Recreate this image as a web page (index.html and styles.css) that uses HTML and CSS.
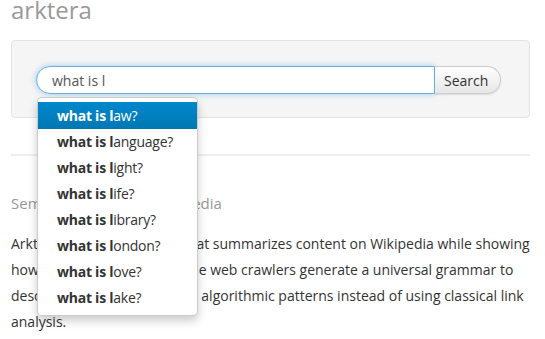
FILE: index.html
```html
<!DOCTYPE html>
<html lang="en">
<head>
    <meta charset="UTF-8">
    <meta name="viewport" content="width=device-width, initial-scale=1.0">
    <title>arktera</title>
    <link rel="stylesheet" href="styles.css">
</head>
<body>
    <div class="container">
        <h1 class="brand">arktera</h1>

        <div class="well">
            <form class="search-form">
                <div class="search-box">
                    <input type="text" class="search-input" value="what is l">
                    <button type="submit" class="search-btn">Search</button>
                </div>
                <ul class="typeahead">
                    <li class="active"><b>what is l</b>aw?</li>
                    <li><b>what is l</b>anguage?</li>
                    <li><b>what is l</b>ight?</li>
                    <li><b>what is l</b>ife?</li>
                    <li><b>what is l</b>ibrary?</li>
                    <li><b>what is l</b>ondon?</li>
                    <li><b>what is l</b>ove?</li>
                    <li><b>what is l</b>ake?</li>
                </ul>
            </form>
        </div>

        <hr>

        <h4 class="subtitle">Semantic search for Wikipedia</h4>
        <p class="about">Arktera is a search engine that summarizes content on Wikipedia while showing how semantic networks in the web crawlers generate a universal grammar to describe human language as algorithmic patterns instead of using classical link analysis.</p>
    </div>
</body>
</html>
```

FILE: styles.css
```css
body {
    margin: 0;
    font-family: "Open Sans", sans-serif;
    font-size: 14px;
    color: #333;
    background: white;
    overflow: hidden;
}
.container {
    width: 519px;
    margin-left: 11px;
}
.brand {
    margin: 0;
    font-size: 24px;
    line-height: 19px;
    font-weight: normal;
    color: #999;
}
.well {
    margin-top: 21px;
    height: 51px;
    padding: 25px 0 0 24px;
    background: #f5f5f5;
    border: 1px solid #e3e3e3;
    border-radius: 4px;
}
.search-form {
    position: relative;
}
.search-box {
    display: flex;
}
.search-input {
    width: 399px;
    height: 28px;
    box-sizing: border-box;
    padding: 0 15px;
    border: 1px solid #66afe9;
    border-radius: 14px 0 0 14px;
    box-shadow: 0 0 6px rgba(102, 175, 233, 0.6);
    font-family: "Open Sans", sans-serif;
    font-size: 14px;
    color: #555;
    outline: none;
}
.search-btn {
    width: 66px;
    height: 28px;
    padding: 0 10px 0 9px;
    border: 1px solid #ccc;
    border-left: none;
    border-radius: 0 14px 14px 0;
    background: linear-gradient(#fff, #e6e6e6);
    box-shadow: 0 1px 2px rgba(0, 0, 0, 0.1);
    font-family: "Open Sans", sans-serif;
    font-size: 14px;
    color: #333;
    text-align: left;
}
.typeahead {
    position: absolute;
    top: 31px;
    left: 1px;
    width: 159px;
    margin: 0;
    padding: 4px 0;
    list-style: none;
    background: white;
    border: 1px solid rgba(0, 0, 0, 0.2);
    border-radius: 5px;
    box-shadow: 0 5px 10px rgba(0, 0, 0, 0.2);
    z-index: 10;
}
.typeahead li {
    height: 26px;
    line-height: 26px;
    padding-left: 19px;
    letter-spacing: -0.25px;
    color: #333;
}
.typeahead b {
    font-weight: 700;
}
.typeahead li.active {
    height: 27px;
    line-height: 27px;
    background: linear-gradient(#0088cc, #0077b3);
    color: white;
}
hr {
    margin: 36px 0 0 0;
    border: 0;
    border-top: 2px solid #eee;
}
.subtitle {
    margin: 37px 0 0 0;
    font-size: 15px;
    font-weight: normal;
    line-height: 20px;
    color: #999;
}
.about {
    margin: 18px 0 0 0;
    font-size: 14px;
    line-height: 26px;
}
```
